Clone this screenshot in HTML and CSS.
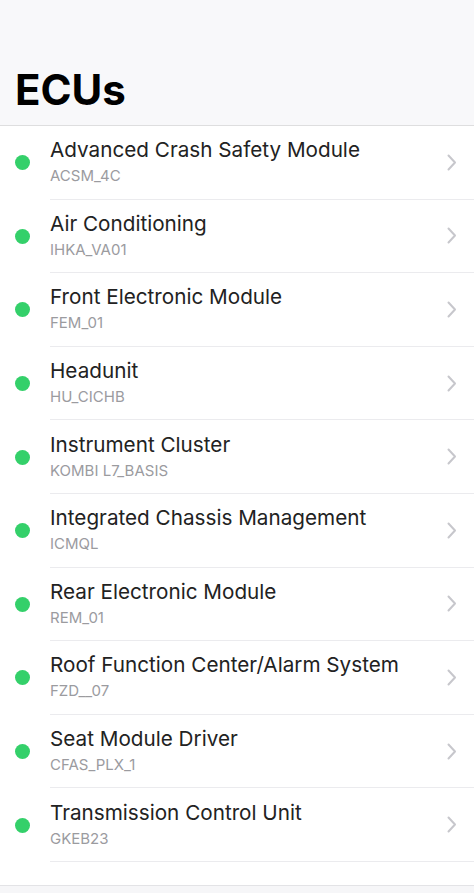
FILE: index.html
```html
<!DOCTYPE html>
<html lang="en">
<head>
    <meta charset="UTF-8">
    <meta name="viewport" content="width=device-width, initial-scale=1.0">
    <title>ECUs</title>
    <link rel="stylesheet" href="styles.css">
</head>
<body>
    <!-- Large title header -->
    <header class="nav-header">
        <h1 class="nav-title">ECUs</h1>
    </header>

    <!-- ECU list -->
    <ul class="ecu-list">
        <li class="ecu-row">
            <span class="status-dot"></span>
            <div class="ecu-body">
                <div class="ecu-text">
                    <span class="ecu-name">Advanced Crash Safety Module</span>
                    <span class="ecu-code">ACSM_4C</span>
                </div>
                <svg class="chevron" width="10" height="17" viewBox="0 0 10 17"><path d="M1.5 1.5 L8 8.5 L1.5 15.5" fill="none" stroke="#c7c7cc" stroke-width="2" stroke-linecap="round" stroke-linejoin="round"/></svg>
            </div>
        </li>
        <li class="ecu-row">
            <span class="status-dot"></span>
            <div class="ecu-body">
                <div class="ecu-text">
                    <span class="ecu-name">Air Conditioning</span>
                    <span class="ecu-code">IHKA_VA01</span>
                </div>
                <svg class="chevron" width="10" height="17" viewBox="0 0 10 17"><path d="M1.5 1.5 L8 8.5 L1.5 15.5" fill="none" stroke="#c7c7cc" stroke-width="2" stroke-linecap="round" stroke-linejoin="round"/></svg>
            </div>
        </li>
        <li class="ecu-row">
            <span class="status-dot"></span>
            <div class="ecu-body">
                <div class="ecu-text">
                    <span class="ecu-name">Front Electronic Module</span>
                    <span class="ecu-code">FEM_01</span>
                </div>
                <svg class="chevron" width="10" height="17" viewBox="0 0 10 17"><path d="M1.5 1.5 L8 8.5 L1.5 15.5" fill="none" stroke="#c7c7cc" stroke-width="2" stroke-linecap="round" stroke-linejoin="round"/></svg>
            </div>
        </li>
        <li class="ecu-row">
            <span class="status-dot"></span>
            <div class="ecu-body">
                <div class="ecu-text">
                    <span class="ecu-name">Headunit</span>
                    <span class="ecu-code">HU_CICHB</span>
                </div>
                <svg class="chevron" width="10" height="17" viewBox="0 0 10 17"><path d="M1.5 1.5 L8 8.5 L1.5 15.5" fill="none" stroke="#c7c7cc" stroke-width="2" stroke-linecap="round" stroke-linejoin="round"/></svg>
            </div>
        </li>
        <li class="ecu-row">
            <span class="status-dot"></span>
            <div class="ecu-body">
                <div class="ecu-text">
                    <span class="ecu-name">Instrument Cluster</span>
                    <span class="ecu-code">KOMBI L7_BASIS</span>
                </div>
                <svg class="chevron" width="10" height="17" viewBox="0 0 10 17"><path d="M1.5 1.5 L8 8.5 L1.5 15.5" fill="none" stroke="#c7c7cc" stroke-width="2" stroke-linecap="round" stroke-linejoin="round"/></svg>
            </div>
        </li>
        <li class="ecu-row">
            <span class="status-dot"></span>
            <div class="ecu-body">
                <div class="ecu-text">
                    <span class="ecu-name">Integrated Chassis Management</span>
                    <span class="ecu-code">ICMQL</span>
                </div>
                <svg class="chevron" width="10" height="17" viewBox="0 0 10 17"><path d="M1.5 1.5 L8 8.5 L1.5 15.5" fill="none" stroke="#c7c7cc" stroke-width="2" stroke-linecap="round" stroke-linejoin="round"/></svg>
            </div>
        </li>
        <li class="ecu-row">
            <span class="status-dot"></span>
            <div class="ecu-body">
                <div class="ecu-text">
                    <span class="ecu-name">Rear Electronic Module</span>
                    <span class="ecu-code">REM_01</span>
                </div>
                <svg class="chevron" width="10" height="17" viewBox="0 0 10 17"><path d="M1.5 1.5 L8 8.5 L1.5 15.5" fill="none" stroke="#c7c7cc" stroke-width="2" stroke-linecap="round" stroke-linejoin="round"/></svg>
            </div>
        </li>
        <li class="ecu-row">
            <span class="status-dot"></span>
            <div class="ecu-body">
                <div class="ecu-text">
                    <span class="ecu-name">Roof Function Center/Alarm System</span>
                    <span class="ecu-code">FZD__07</span>
                </div>
                <svg class="chevron" width="10" height="17" viewBox="0 0 10 17"><path d="M1.5 1.5 L8 8.5 L1.5 15.5" fill="none" stroke="#c7c7cc" stroke-width="2" stroke-linecap="round" stroke-linejoin="round"/></svg>
            </div>
        </li>
        <li class="ecu-row">
            <span class="status-dot"></span>
            <div class="ecu-body">
                <div class="ecu-text">
                    <span class="ecu-name">Seat Module Driver</span>
                    <span class="ecu-code">CFAS_PLX_1</span>
                </div>
                <svg class="chevron" width="10" height="17" viewBox="0 0 10 17"><path d="M1.5 1.5 L8 8.5 L1.5 15.5" fill="none" stroke="#c7c7cc" stroke-width="2" stroke-linecap="round" stroke-linejoin="round"/></svg>
            </div>
        </li>
        <li class="ecu-row">
            <span class="status-dot"></span>
            <div class="ecu-body">
                <div class="ecu-text">
                    <span class="ecu-name">Transmission Control Unit</span>
                    <span class="ecu-code">GKEB23</span>
                </div>
                <svg class="chevron" width="10" height="17" viewBox="0 0 10 17"><path d="M1.5 1.5 L8 8.5 L1.5 15.5" fill="none" stroke="#c7c7cc" stroke-width="2" stroke-linecap="round" stroke-linejoin="round"/></svg>
            </div>
        </li>
    </ul>

    <!-- Space under the list and the bar below -->
    <div class="list-footer"></div>
    <div class="bottom-bar"></div>
</body>
</html>
```

FILE: styles.css
```css
/* Basic page styling */
body {
    margin: 0;
    background-color: #ffffff;
    font-family: Inter, "Liberation Sans", Arial, sans-serif;
    color: #1c1c1e;
}

/* Large title header */
.nav-header {
    height: 126px;
    box-sizing: border-box;
    background-color: #f8f8fa;
    border-bottom: 1px solid #dededf;
    padding: 66px 15px 0;
}

.nav-title {
    margin: 0;
    font-size: 42px;
    font-weight: 700;
    line-height: 48px;
    color: #000;
    letter-spacing: 0;
}

/* List rows */
.ecu-list {
    list-style: none;
    margin: 0;
    padding: 0;
}

.ecu-row {
    display: flex;
    align-items: center;
    height: 73.6px;
}

.status-dot {
    flex: none;
    width: 15px;
    height: 15px;
    border-radius: 50%;
    background-color: #34d06a;
    margin: 0 20px 0 15px;
}

.ecu-body {
    flex: 1;
    align-self: stretch;
    display: flex;
    align-items: center;
    border-bottom: 1px solid #ebebee;
    padding-right: 17px;
}

.ecu-text {
    flex: 1;
    display: flex;
    flex-direction: column;
    padding-bottom: 1px;
}

.ecu-name {
    font-size: 20.7px;
    line-height: 26px;
    color: #222;
}

.ecu-code {
    font-size: 15px;
    line-height: 20px;
    color: #9b9b9f;
    margin-top: 3px;
}

.chevron {
    flex: none;
    display: block;
}

/* Area below the list */
.list-footer {
    height: 23px;
    background-color: #ffffff;
}

.bottom-bar {
    height: 7px;
    background-color: #f6f6f8;
    border-top: 1px solid #e3e3e6;
}
```
